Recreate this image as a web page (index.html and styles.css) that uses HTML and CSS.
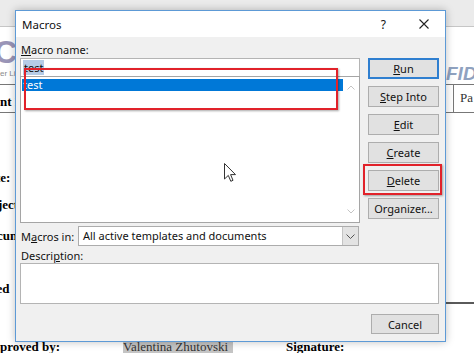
FILE: index.html
```html
<!DOCTYPE html>
<html>
<head>
<title>Macros</title>
<link rel="stylesheet" href="styles.css">
</head>
<body>

<!-- documento por tras -->
<div class="ribbon"></div>
<div class="page">
    <div class="logo-row"><span class="logo-c">C</span></div>
    <div class="tag-row">
        <span class="tagline">er Li</span>
        <span class="brand-fid">FID</span>
    </div>
    <div class="doc-table">
        <div class="cell-left">nt I</div>
        <div class="cell-right">Pa</div>
    </div>
    <div class="field f-date">te:</div>
    <div class="field f-subj">ject</div>
    <div class="field f-doc">cument</div>
    <div class="field f-ved">ved</div>
    <div class="doc-rule"></div>
    <div class="sign-row">
        <span class="sign-a">proved by:</span>
        <span class="sign-name">Valentina Zhutovski</span>
        <span class="sign-b">Signature:</span>
    </div>
</div>

<!-- janela de macros -->
<div class="dialog">
    <div class="titlebar">
        <span class="title">Macros</span>
        <span class="help">?</span>
        <svg class="close" width="10" height="10" viewBox="0 0 10 10">
            <path d="M0.5 0.5 L9.5 9.5 M9.5 0.5 L0.5 9.5" stroke="#222" stroke-width="1.1" fill="none"/>
        </svg>
    </div>
    <div class="dlg-body">
        <div class="top">
            <div class="left-col">
                <div class="lbl"><u>M</u>acro name:</div>
                <div class="name-box"><span class="sel-text">test</span></div>
                <div class="list">
                    <div class="list-items">
                        <div class="list-item">test</div>
                    </div>
                    <div class="scroll">
                        <svg width="8" height="5" viewBox="0 0 8 5"><path d="M0.5 4.5 L4 1 L7.5 4.5" stroke="#c4c4c4" fill="none"/></svg>
                        <svg width="8" height="5" viewBox="0 0 8 5"><path d="M0.5 0.5 L4 4 L7.5 0.5" stroke="#c4c4c4" fill="none"/></svg>
                    </div>
                </div>
            </div>
            <div class="btn-col">
                <button class="btn btn-default"><u>R</u>un</button>
                <button class="btn"><u>S</u>tep Into</button>
                <button class="btn"><u>E</u>dit</button>
                <button class="btn"><u>C</u>reate</button>
                <button class="btn"><u>D</u>elete</button>
                <button class="btn">Or<u>g</u>anizer...</button>
            </div>
        </div>
        <div class="in-row">
            <div class="in-lbl">M<u>a</u>cros in:</div>
            <div class="combo">
                <span class="combo-text">All active templates and documents</span>
                <span class="combo-btn">
                    <svg width="9" height="5" viewBox="0 0 9 5"><path d="M0.5 0.5 L4.5 4.5 L8.5 0.5" stroke="#555" fill="none"/></svg>
                </span>
            </div>
        </div>
        <div class="lbl lbl-desc">Descri<u>p</u>tion:</div>
        <div class="desc"></div>
        <div class="footer">
            <button class="btn btn-cancel">Cancel</button>
        </div>
    </div>
</div>

<!-- marcas vermelhas e cursor -->
<div class="mark mark-list"></div>
<div class="mark mark-delete"></div>
<svg class="cursor" width="13" height="20" viewBox="0 0 13 20">
    <path d="M0.5 0.5 L0.5 16 L4.3 12.4 L6.8 18.3 L9 17.3 L6.6 11.6 L11.5 11.6 Z" fill="#fff" stroke="#333" stroke-width="1"/>
</svg>

</body>
</html>
```

FILE: styles.css
```css
/* CSS */
body {
    margin: 0;
    width: 474px;
    height: 353px;
    overflow: hidden;
    position: relative;
    background: #fff;
    font-family: "Liberation Serif", serif;
}

/* documento */
.ribbon {
    height: 26px;
    background: #ebebeb;
    border-bottom: 1px solid #c6c6c6;
}

.logo-row {
    margin-top: 12px;
    height: 26px;
    line-height: 26px;
}

.logo-c {
    font-family: "Liberation Sans", sans-serif;
    font-weight: bold;
    font-size: 32px;
    color: #9a95b7;
    margin-left: -6px;
}

.tag-row {
    display: flex;
    height: 18px;
    line-height: 18px;
    white-space: nowrap;
}

.tagline {
    flex-shrink: 0;
    width: 446px;
    font-family: "Liberation Sans", sans-serif;
    font-size: 8px;
    color: #8a8a8a;
}

.brand-fid {
    font-family: "Liberation Sans", sans-serif;
    font-weight: bold;
    font-style: italic;
    font-size: 19px;
    color: #8fa2c0;
}

.doc-table {
    display: flex;
    margin-top: 1px;
    height: 27px;
    border-top: 1px solid #777;
    border-bottom: 1px solid #777;
    font-size: 13px;
    white-space: nowrap;
}

.cell-left {
    flex-shrink: 0;
    width: 453px;
    border-right: 1px solid #777;
    font-weight: bold;
    padding-top: 9px;
}

.cell-right {
    padding: 5px 0 0 6px;
    color: #333;
}

.field {
    font-size: 13px;
    font-weight: bold;
    line-height: 16px;
    white-space: nowrap;
}

.f-date { margin-top: 57px; margin-left: -4px; }
.f-subj { margin-top: 11px; margin-left: -2px; }
.f-doc { margin-top: 15px; margin-left: -3px; }
.f-ved { margin-top: 37px; margin-left: -10px; }

.doc-rule {
    margin: 5px 0 0 20px;
    height: 2px;
    background: #5a5a5a;
}

.sign-row {
    display: flex;
    margin-top: 35px;
    font-size: 13px;
    line-height: 16px;
    white-space: nowrap;
}

.sign-a {
    font-weight: bold;
    width: 123px;
}

.sign-name {
    background: #c4c4c4;
    color: #333;
    width: 110px;
}

.sign-b {
    margin-left: 53px;
    font-weight: bold;
}

/* janela */
.dialog {
    position: absolute;
    left: 15px;
    top: 10px;
    width: 431px;
    height: 332px;
    box-sizing: border-box;
    border: 1px solid #5d9ad6;
    background: #f0f0f0;
    box-shadow: 0 0 8px rgba(0, 0, 0, 0.25);
    font-family: "Noto Sans", sans-serif;
    font-size: 11px;
    color: #111;
}

.titlebar {
    display: flex;
    align-items: center;
    height: 26px;
    background: #fff;
    padding-left: 6px;
}

.title {
    flex: 1;
    font-size: 11.5px;
}

.help {
    font-size: 12px;
    margin-right: 33px;
}

.close {
    margin-right: 16px;
}

.dlg-body {
    padding: 6px 6px 7px 4px;
}

.top {
    display: flex;
    gap: 8px;
}

.left-col {
    width: 340px;
}

.lbl {
    height: 15px;
    line-height: 13px;
    padding-left: 1px;
}

.name-box {
    height: 18px;
    box-sizing: border-box;
    border: 1px solid #b4b4b4;
    border-bottom: none;
    background: #fff;
    padding: 2px 0 0 2px;
    line-height: 13px;
}

.sel-text {
    background: #b6cce6;
    padding: 0 1px;
}

.list {
    display: flex;
    height: 147px;
    box-sizing: border-box;
    border: 1px solid #a5a5a5;
    background: #fff;
}

.list-items {
    flex: 1;
    padding: 2px 0 0 1px;
}

.list-item {
    background: #0078d7;
    color: #fff;
    height: 12px;
    line-height: 12px;
    padding-left: 1px;
}

.scroll {
    width: 16px;
    display: flex;
    flex-direction: column;
    justify-content: space-between;
    align-items: center;
    padding: 8px 0 8px;
}

.btn-col {
    width: 71px;
    display: flex;
    flex-direction: column;
    gap: 7px;
    padding-top: 15px;
}

.btn {
    height: 21px;
    box-sizing: border-box;
    border: 1px solid #adadad;
    background: #e1e1e1;
    font-family: "Noto Sans", sans-serif;
    font-size: 11px;
    color: #111;
    padding: 0;
}

.btn-default {
    border: 2px solid #2f7fd0;
}

.in-row {
    display: flex;
    align-items: center;
    margin-top: 3px;
    height: 20px;
}

.in-lbl {
    width: 57px;
    padding-left: 1px;
}

.combo {
    display: flex;
    width: 281px;
    height: 20px;
    box-sizing: border-box;
    border: 1px solid #acacac;
    background: #fff;
}

.combo-text {
    flex: 1;
    padding-left: 4px;
    line-height: 18px;
}

.combo-btn {
    width: 15px;
    display: flex;
    align-items: center;
    justify-content: center;
    background: #e3e3e3;
    border-left: 1px solid #c4c4c4;
}

.lbl-desc {
    margin-top: 3px;
    height: 14px;
}

.desc {
    height: 41px;
    box-sizing: border-box;
    border: 1px solid #b4b4b4;
    background: #fff;
}

.footer {
    display: flex;
    justify-content: flex-end;
    margin-top: 10px;
}

.btn-cancel {
    width: 68px;
    height: 20px;
}

/* marcas */
.mark {
    position: absolute;
    border: 2px solid #e1222a;
    box-shadow: 1px 1px 2px rgba(0, 0, 0, 0.35);
}

.mark-list {
    left: 24px;
    top: 68px;
    width: 310px;
    height: 38px;
}

.mark-delete {
    left: 363px;
    top: 164px;
    width: 75px;
    height: 27px;
}

.cursor {
    position: absolute;
    left: 224px;
    top: 163px;
}
```
